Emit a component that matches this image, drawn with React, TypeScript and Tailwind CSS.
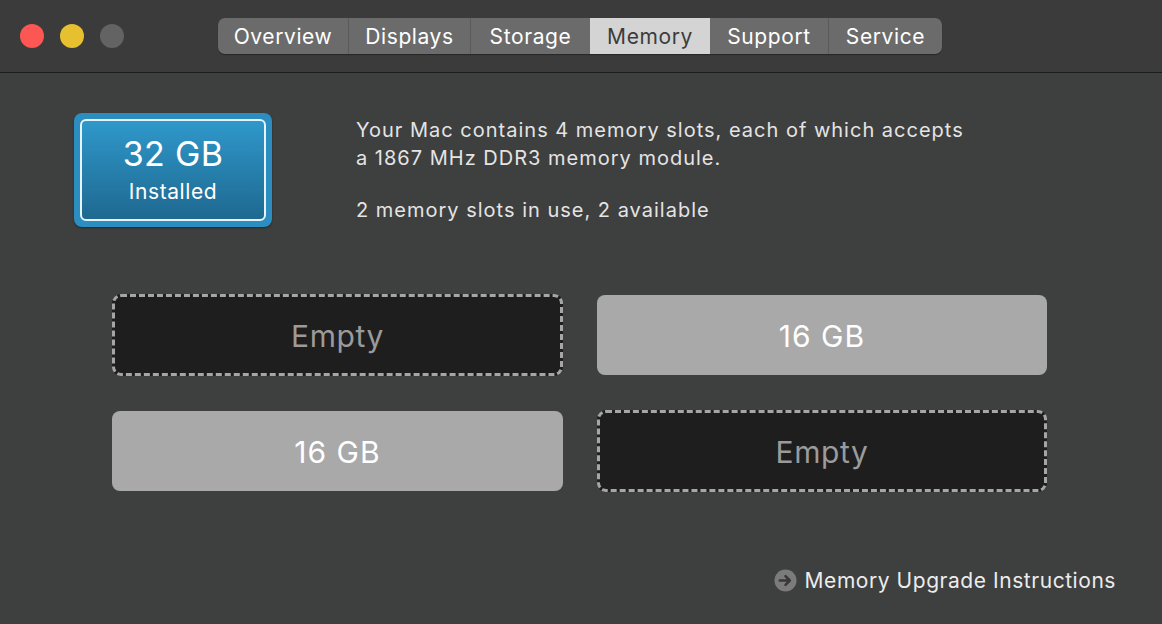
import React from "react";

const tabs = ["Overview", "Displays", "Storage", "Memory", "Support", "Service"];
const tabWidths = [131, 122, 119, 120, 119, 113];

function Slot({ size }: { size?: string }) {
  if (!size) {
    return (
      <div className="h-[82px] rounded-[9px] border-[3px] border-dashed border-[#a6a6a6] bg-[#1e1e1e] flex items-center justify-center pt-[3px] text-[30px] tracking-[0.6px] text-[#9b9b9b]">
        Empty
      </div>
    );
  }
  return (
    <div className="h-[80px] rounded-[8px] bg-[#a9a9a9] flex items-center justify-center pt-[3px] text-[30px] tracking-[1px] text-white">
      {size}
    </div>
  );
}

export default function App() {
  return (
    <div
      className="w-[1162px] h-[624px] bg-[#3e3f3f] flex flex-col overflow-hidden"
      style={{ fontFamily: "Inter, 'Noto Sans', sans-serif" }}
    >
      {/* title bar */}
      <div className="h-[73px] bg-[#3b3b3b] border-b border-[#1c1c1c] flex items-center relative shrink-0">
        <div className="flex gap-[16px] pl-[20px]">
          <div className="w-[24px] h-[24px] rounded-full bg-[#fc5753]" />
          <div className="w-[24px] h-[24px] rounded-full bg-[#e6c02f]" />
          <div className="w-[24px] h-[24px] rounded-full bg-[#636363]" />
        </div>
        <div className="absolute left-[218px] top-[18px] h-[36px] flex rounded-[7px] overflow-hidden bg-[#6b6b6b] shadow-[0_1px_1px_rgba(0,0,0,0.35)]">
          {tabs.map((t, i) => (
            <div
              key={t}
              style={{ width: tabWidths[i] }}
              className={
                t === "Memory"
                  ? "flex items-center justify-center pt-[1px] text-[21px] tracking-[0.6px] bg-[#d4d4d4] text-[#3c3c3c]"
                  : "flex items-center justify-center pt-[1px] text-[21px] tracking-[0.6px] text-white " +
                    (i < tabs.length - 1 && tabs[i + 1] !== "Memory" ? "border-r border-[#5a5a5a]" : "")
              }
            >
              {t}
            </div>
          ))}
        </div>
      </div>

      {/* summary */}
      <div className="flex pt-[40px] pl-[74px]">
        <div className="w-[198px] h-[114px] rounded-[8px] bg-[#2c8dc0] p-[6px] shadow-[0_1px_2px_rgba(0,0,0,0.4)]">
          <div className="w-full h-full rounded-[6px] border-2 border-[#e8f4fb] bg-gradient-to-b from-[#2f98cb] to-[#1e6990] flex flex-col items-center justify-center text-white">
            <div className="text-[34px] leading-[40px] tracking-[0.3px] -mt-[2px]">32 GB</div>
            <div className="text-[21px] leading-[26px] mt-[5px] tracking-[0.6px]">Installed</div>
          </div>
        </div>
        <div className="ml-[84px] pt-[3px] text-[20px] leading-[28px] tracking-[1px] text-[#e4e4e4]">
          <p>Your Mac contains 4 memory slots, each of which accepts</p>
          <p>a 1867 MHz DDR3 memory module.</p>
          <p className="mt-[24px]">2 memory slots in use, 2 available</p>
        </div>
      </div>

      {/* slots */}
      <div className="grid grid-cols-[451px_450px] gap-x-[34px] gap-y-[34px] pl-[112px] pt-[67px] items-center">
        <Slot />
        <Slot size="16 GB" />
        <Slot size="16 GB" />
        <Slot />
      </div>

      {/* link */}
      <div className="flex-1 flex items-end justify-end pr-[46px] pb-[28px]">
        <div className="flex items-center gap-[8px] text-[21px] tracking-[0.55px] text-[#ececec]">
          <svg width="23" height="23" viewBox="0 0 24 24">
            <circle cx="12" cy="12" r="11.5" fill="#7b7b7b" />
            <path d="M6 12h10M12 7.5l4.5 4.5-4.5 4.5" stroke="#383838" strokeWidth="2.6" fill="none" strokeLinecap="round" strokeLinejoin="round" />
          </svg>
          <span>Memory Upgrade Instructions</span>
        </div>
      </div>
    </div>
  );
}
